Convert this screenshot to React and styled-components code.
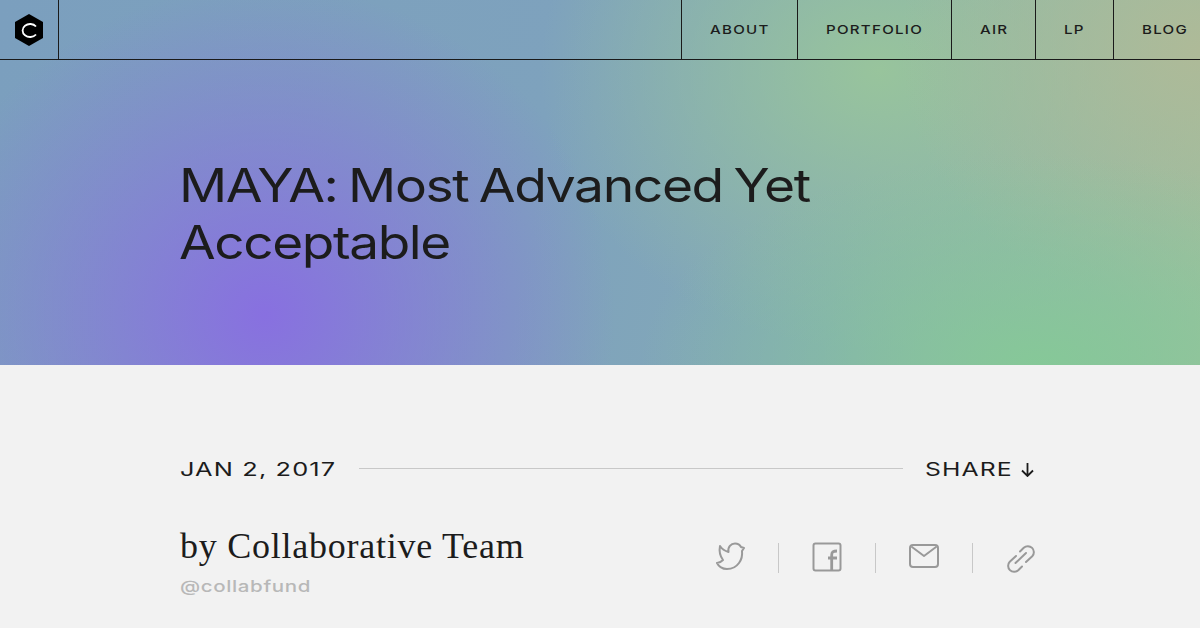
import React from "react";
import styled, { createGlobalStyle } from "styled-components";

const Global = createGlobalStyle`
  html, body { margin: 0; padding: 0; background: #f2f2f2; }
  body { font-family: Inter, "Liberation Sans", Arial, sans-serif; color: #1c1c1c; overflow: hidden; }
`;

const Page = styled.div`
  width: 1200px;
  height: 628px;
  overflow: hidden;
`;

const Hero = styled.header`
  height: 365px;
  background:
    radial-gradient(ellipse 350px 330px at 265px 315px, rgba(136,112,224,1) 0%, rgba(136,112,224,0) 100%),
    radial-gradient(ellipse 400px 210px at 1040px 365px, rgba(134,200,152,1) 0%, rgba(134,200,152,0) 100%),
    radial-gradient(ellipse 300px 260px at 1200px 50px, rgba(174,186,152,1) 0%, rgba(174,186,152,0) 100%),
    radial-gradient(ellipse 340px 280px at 880px 70px, rgba(152,196,156,1) 0%, rgba(152,196,156,0) 100%),
    linear-gradient(100deg, #7b9fbe 0%, #7ea2bd 45%, #84aab6 70%, #9cc0a0 100%);
`;

const Nav = styled.nav`
  display: flex;
  height: 59px;
  border-bottom: 1px solid #1a1a1a;
`;

const LogoCell = styled.div`
  width: 58px;
  display: flex;
  align-items: center;
  justify-content: center;
  border-right: 1px solid #1a1a1a;
`;

const Links = styled.div`
  display: flex;
  margin-left: auto;
`;

const NavLink = styled.a`
  width: ${(p) => p.$w}px;
  display: flex;
  align-items: center;
  padding-left: 28px;
  border-left: 1px solid #1a1a1a;
  box-sizing: border-box;
  font-size: 12px;
  font-weight: 500;
  letter-spacing: 1px;
  color: #1c1c1c;
`;

const Wide = styled.span`
  display: inline-block;
  white-space: nowrap;
  transform: scaleX(${(p) => p.$sx || 1.2});
  transform-origin: left center;
`;

const Title = styled.h1`
  margin: 0;
  padding: 97px 0 0 179px;
  font-size: 46px;
  line-height: 57px;
  font-weight: 400;
  letter-spacing: -1.2px;
  word-spacing: -2.7px;
`;

const TitleLine = styled(Wide)`
  display: block;
`;

const Content = styled.main`
  padding: 93px 165px 0 180px;
`;

const MetaRow = styled.div`
  display: flex;
  align-items: center;
  height: 22px;
  font-size: 18px;
  letter-spacing: 0.8px;
`;

const DateText = styled.div`
  width: 179px;
`;

const Rule = styled.div`
  flex: 1;
  height: 1px;
  margin-bottom: 2px;
  background: #c8c8c8;
`;

const ShareText = styled.div`
  width: 110px;
  margin-left: 22px;
  display: flex;
  align-items: center;
  justify-content: space-between;
`;

const ArrowIcon = styled.svg`
  display: block;
  fill: none;
  stroke: #1c1c1c;
  stroke-width: 1.8;
`;

const AuthorRow = styled.div`
  display: flex;
  justify-content: space-between;
  margin-top: 44px;
`;

const Author = styled.div`
  font-family: "Liberation Serif", serif;
  font-size: 36px;
  line-height: 44px;
  letter-spacing: 0.75px;
`;

const Handle = styled.div`
  margin-top: 8px;
  font-size: 16px;
  font-weight: 500;
  letter-spacing: 0.5px;
  color: #b8b8b8;
`;

const Shares = styled.div`
  display: flex;
  height: 30px;
  margin: 19px -1px 0 0;
`;

const ShareIcon = styled.a`
  height: 30px;
  padding: 0 33px;
  border-right: 1px solid #c8c8c8;
  &:first-child { padding-left: 0; }
  &:last-child { padding-right: 0; border-right: none; }
  svg {
    display: block;
    overflow: visible;
    fill: none;
    stroke: #999;
    stroke-width: 2;
    stroke-linejoin: round;
    stroke-linecap: round;
  }
`;

const Logo = () => (
  <svg width="28" height="32" viewBox="0 0 28 32">
    <polygon points="14,0 28,8 28,24 14,32 0,24 0,8" fill="#000" />
    <path d="M21 12.5A7.500 6.500 0 1 0 21 20.500" fill="none" stroke="#fff" strokeWidth="1.8" />
  </svg>
);

const links = [
  { label: "ABOUT", w: 116 },
  { label: "PORTFOLIO", w: 154 },
  { label: "AIR", w: 84 },
  { label: "LP", w: 78 },
  { label: "BLOG", w: 87 },
];

export default function App() {
  return (
    <Page>
      <Global />
      <Hero>
        <Nav>
          <LogoCell><Logo /></LogoCell>
          <Links>
            {links.map((l) => (
              <NavLink key={l.label} $w={l.w}>
                <Wide $sx={1.26}>{l.label}</Wide>
              </NavLink>
            ))}
          </Links>
        </Nav>
        <Title>
          <TitleLine $sx={1.16}>MAYA: Most Advanced Yet</TitleLine>
          <TitleLine $sx={1.155}>Acceptable</TitleLine>
        </Title>
      </Hero>
      <Content>
        <MetaRow>
          <DateText><Wide $sx={1.41}>JAN 2, 2017</Wide></DateText>
          <Rule />
          <ShareText>
            <Wide $sx={1.376}>SHARE</Wide>
            <ArrowIcon width="15" height="15" viewBox="0 0 15 15">
              <path d="M7.500 1V14M2 8.500L7.500 14L13 8.500" />
            </ArrowIcon>
          </ShareText>
        </MetaRow>
        <AuthorRow>
          <div>
            <Author>by Collaborative Team</Author>
            <Handle><Wide $sx={1.28}>@collabfund</Wide></Handle>
          </div>
          <Shares>
            <ShareIcon>
              <svg width="30" height="30" viewBox="0 1 30 30">
                <path d="M5 4C7 7 10 9 13.500 10C12.500 5 16 1.500 20 1.500C23 1.500 25 3 26 5L29 6L27 9C28 17 23 27 12 27C8 27 4 25 2 21C4 21 6 20 8 18C5 14 4 9 5 4Z" />
              </svg>
            </ShareIcon>
            <ShareIcon>
              <svg width="30" height="30" viewBox="0 1 30 30">
                <rect x="1.500" y="1.500" width="27" height="27" rx="2" />
                <path d="M19.700 28V13C19.700 10 21 9 25 9M16 16H25" strokeWidth="2.800" strokeLinecap="butt" />
              </svg>
            </ShareIcon>
            <ShareIcon>
              <svg width="30" height="30" viewBox="0 1 30 30">
                <rect x="1" y="3" width="28" height="22" rx="3" />
                <path d="M3 5L15 14L27 5" />
              </svg>
            </ShareIcon>
            <ShareIcon>
              <svg width="30" height="30" viewBox="0 1 30 30">
                <path d="M14 9.500L17.760 5.760A6 6 0 0 1 26.240 14.240L20 20M9.500 21L20 11M16 24.500L12.240 28.240A6 6 0 0 1 3.760 19.760L10 14" />
              </svg>
            </ShareIcon>
          </Shares>
        </AuthorRow>
      </Content>
    </Page>
  );
}
